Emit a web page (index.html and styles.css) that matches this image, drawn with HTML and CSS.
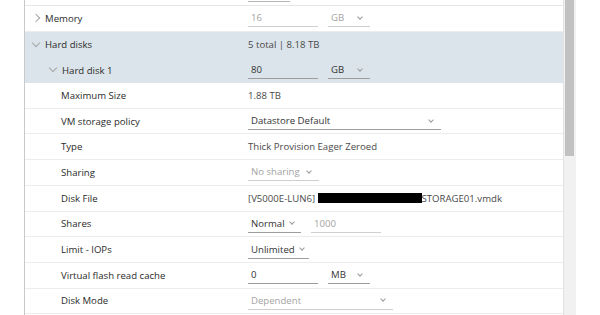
FILE: index.html
```html
<!DOCTYPE html>
<html lang="en">

<head>
    <meta charset="UTF-8">
    <title>Edit Settings - Hard disks</title>
    <link rel="stylesheet" href="styles.css">
</head>

<body>
    <div class="page">
        <div class="gutter"></div>

        <!-- Settings panel -->
        <div class="panel">
            <div class="row-cut">
                <div class="cut-field"></div>
            </div>

            <div class="row">
                <div class="label"><span class="chev chev-right"></span>Memory</div>
                <div class="value">
                    <span class="field w70 disabled">16</span>
                    <span class="field select w42 disabled">GB<span class="caret"></span></span>
                </div>
            </div>

            <div class="group">
                <div class="row row-plain">
                    <div class="label"><span class="chev chev-down"></span>Hard disks</div>
                    <div class="value text">5 total | 8.18 TB</div>
                </div>
                <div class="row row-plain">
                    <div class="label sub"><span class="chev chev-down"></span>Hard disk 1</div>
                    <div class="value">
                        <span class="field w70">80</span>
                        <span class="field select w42">GB<span class="caret"></span></span>
                    </div>
                </div>
            </div>

            <div class="row">
                <div class="label item">Maximum Size</div>
                <div class="value text">1.88 TB</div>
            </div>
            <div class="row">
                <div class="label item">VM storage policy</div>
                <div class="value">
                    <span class="field select w193">Datastore Default<span class="caret"></span></span>
                </div>
            </div>
            <div class="row">
                <div class="label item">Type</div>
                <div class="value text">Thick Provision Eager Zeroed</div>
            </div>
            <div class="row">
                <div class="label item">Sharing</div>
                <div class="value">
                    <span class="field select w71 disabled">No sharing<span class="caret"></span></span>
                </div>
            </div>
            <div class="row">
                <div class="label item">Disk File</div>
                <div class="value text">[V5000E-LUN6] <span class="redacted"></span>STORAGE01.vmdk</div>
            </div>
            <div class="row">
                <div class="label item">Shares</div>
                <div class="value">
                    <span class="field select w53">Normal<span class="caret"></span></span>
                    <span class="field w70 disabled">1000</span>
                </div>
            </div>
            <div class="row">
                <div class="label item">Limit - IOPs</div>
                <div class="value">
                    <span class="field select w61">Unlimited<span class="caret"></span></span>
                </div>
            </div>
            <div class="row">
                <div class="label item">Virtual flash read cache</div>
                <div class="value">
                    <span class="field w70">0</span>
                    <span class="field select w42">MB<span class="caret"></span></span>
                </div>
            </div>
            <div class="row">
                <div class="label item">Disk Mode</div>
                <div class="value">
                    <span class="field select w145 disabled">Dependent<span class="caret"></span></span>
                </div>
            </div>
        </div>

        <!-- Scrollbar -->
        <div class="scrollbar">
            <div class="thumb"></div>
        </div>
        <div class="gutter"></div>
    </div>
</body>

</html>
```

FILE: styles.css
```css
/* Base */
body {
    margin: 0;
    padding: 0;
    background-color: #fff;
    font-family: "Open Sans", "Noto Sans", sans-serif;
    font-size: 9.6px;
    color: #333;
}

.page {
    display: flex;
    height: 315px;
    overflow: hidden;
}

.gutter {
    width: 24px;
    flex: none;
}

/* Panel */
.panel {
    flex: 1;
    border-left: 1px solid #c9c9c9;
    overflow: hidden;
}

.row-cut {
    height: 5px;
    box-sizing: border-box;
    border-bottom: 1px solid #e6e6e6;
    padding-left: 223px;
}

.cut-field {
    width: 42px;
    height: 1px;
    background-color: #b5b5b5;
    margin-top: 1px;
}

.row {
    display: grid;
    grid-template-columns: 223px 1fr;
    align-items: center;
    height: 25.7px;
    box-sizing: border-box;
    border-bottom: 1px solid #ececec;
}

.group {
    background-color: #dbe4ea;
}

.row-plain {
    border-bottom: none;
}

.label {
    display: flex;
    align-items: center;
    padding-left: 8px;
    color: #2b2b2b;
}

.label.sub {
    padding-left: 25px;
}

.label.item {
    padding-left: 36px;
}

.chev {
    width: 5px;
    height: 5px;
    border-right: 1px solid #a8a8a8;
    border-bottom: 1px solid #a8a8a8;
    margin-right: 6px;
}

.chev-right {
    transform: rotate(-45deg);
}

.chev-down {
    transform: translateY(-2px) rotate(45deg);
}

.value {
    display: flex;
    align-items: center;
    gap: 10px;
}

.value.text {
    display: block;
    color: #4a4a4a;
}

/* Form fields */
.field {
    display: inline-flex;
    align-items: center;
    justify-content: space-between;
    height: 18px;
    box-sizing: border-box;
    padding: 0 3px;
    border-bottom: 1px solid #9d9d9d;
    color: #333;
    white-space: nowrap;
}

.field.disabled {
    color: #a3a3a3;
    border-bottom-color: #cfcfcf;
}

.caret {
    flex: none;
    width: 3px;
    height: 3px;
    border-right: 1px solid #999;
    border-bottom: 1px solid #999;
    transform: translateY(-1px) rotate(45deg);
    margin-left: 5px;
    margin-right: 5px;
}

.w42 { width: 42px; }
.w53 { width: 53px; }
.w61 { width: 61px; }
.w70 { width: 70px; }
.w71 { width: 71px; }
.w145 { width: 145px; }
.w193 { width: 193px; }

.redacted {
    display: inline-block;
    width: 104px;
    height: 10px;
    background-color: #000;
    vertical-align: -1px;
}

/* Scrollbar */
.scrollbar {
    width: 13px;
    flex: none;
    background-color: #f1f1f1;
    border-left: 1px solid #e2e2e2;
    box-sizing: border-box;
    padding: 0 2px 0 1px;
}

.thumb {
    height: 156px;
    background-color: #c1c1c1;
}
```
